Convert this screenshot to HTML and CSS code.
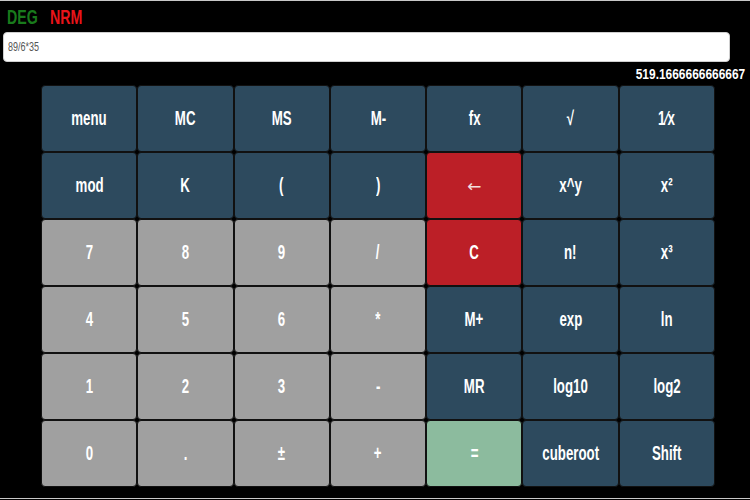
FILE: index.html
```html
<!DOCTYPE html>
<html>
<head>
<meta charset="utf-8">
<link rel="stylesheet" href="styles.css">
</head>
<body>
<div class="frame">
  <div class="modes">
    <span class="sq deg">DEG</span><span class="sq nrm">NRM</span>
  </div>
  <div class="input"><span class="sq">89/6*35</span></div>
  <div class="result"><span class="sq">519.1666666666667</span></div>
  <div class="keys">
    <div class="key blue"><span class="sq">menu</span></div>
    <div class="key blue"><span class="sq">MC</span></div>
    <div class="key blue"><span class="sq">MS</span></div>
    <div class="key blue"><span class="sq">M-</span></div>
    <div class="key blue"><span class="sq">fx</span></div>
    <div class="key blue"><span class="sq">√</span></div>
    <div class="key blue"><span class="sq">1⁄x</span></div>

    <div class="key blue"><span class="sq">mod</span></div>
    <div class="key blue"><span class="sq">K</span></div>
    <div class="key blue"><span class="sq">(</span></div>
    <div class="key blue"><span class="sq">)</span></div>
    <div class="key red"><span class="sq arrow">←</span></div>
    <div class="key blue"><span class="sq">x^y</span></div>
    <div class="key blue"><span class="sq">x²</span></div>

    <div class="key gray"><span class="sq">7</span></div>
    <div class="key gray"><span class="sq">8</span></div>
    <div class="key gray"><span class="sq">9</span></div>
    <div class="key gray"><span class="sq">/</span></div>
    <div class="key red"><span class="sq">C</span></div>
    <div class="key blue"><span class="sq">n!</span></div>
    <div class="key blue"><span class="sq">x³</span></div>

    <div class="key gray"><span class="sq">4</span></div>
    <div class="key gray"><span class="sq">5</span></div>
    <div class="key gray"><span class="sq">6</span></div>
    <div class="key gray"><span class="sq">*</span></div>
    <div class="key blue"><span class="sq">M+</span></div>
    <div class="key blue"><span class="sq">exp</span></div>
    <div class="key blue"><span class="sq">ln</span></div>

    <div class="key gray"><span class="sq">1</span></div>
    <div class="key gray"><span class="sq">2</span></div>
    <div class="key gray"><span class="sq">3</span></div>
    <div class="key gray"><span class="sq">-</span></div>
    <div class="key blue"><span class="sq">MR</span></div>
    <div class="key blue"><span class="sq">log10</span></div>
    <div class="key blue"><span class="sq">log2</span></div>

    <div class="key gray"><span class="sq">0</span></div>
    <div class="key gray"><span class="sq">.</span></div>
    <div class="key gray"><span class="sq">±</span></div>
    <div class="key gray"><span class="sq">+</span></div>
    <div class="key green"><span class="sq">=</span></div>
    <div class="key blue"><span class="sq">cuberoot</span></div>
    <div class="key blue"><span class="sq">Shift</span></div>
  </div>
</div>
</body>
</html>
```
FILE: styles.css
```css
html, body {
  margin: 0;
  padding: 0;
  background: #000;
}
body {
  font-family: "Liberation Sans", Arial, sans-serif;
  width: 750px;
  height: 500px;
  overflow: hidden;
}
.frame {
  box-sizing: border-box;
  width: 750px;
  height: 499px;
  border-top: 1px solid #c8c8c8;
  border-bottom: 1px solid #c8c8c8;
}
.sq {
  display: inline-block;
  transform: scaleX(0.68);
  white-space: nowrap;
}
.modes {
  height: 31px;
  display: flex;
  align-items: center;
  padding-left: 7px;
  font-weight: bold;
  font-size: 20px;
  padding-top: 1px;
  box-sizing: border-box;
}
.modes .sq {
  transform-origin: left center;
  transform: scaleX(0.71);
}
.deg { color: #197a1c; width: 43px; }
.nrm { color: #e8141a; }
.input {
  box-sizing: border-box;
  margin-left: 3px;
  width: 727px;
  height: 30px;
  background: #fff;
  border: 1px solid #cfcfcf;
  border-radius: 4px;
  display: flex;
  align-items: center;
  padding-left: 4px;
  font-size: 12.5px;
  color: #555;
}
.input .sq {
  transform-origin: left center;
  transform: scaleX(0.72);
}
.result {
  height: 23px;
  display: flex;
  align-items: center;
  justify-content: flex-end;
  padding-right: 5px;
  color: #fff;
  font-weight: bold;
  font-size: 15.5px;
}
.result .sq {
  transform-origin: right center;
  transform: scaleX(0.77);
}
.keys {
  margin-left: 41px;
  width: 674px;
  display: grid;
  grid-template-columns: repeat(7, 1fr);
  grid-template-rows: repeat(6, 67px);
}
.key {
  box-sizing: border-box;
  border: 1px solid #111;
  border-radius: 4px;
  display: flex;
  align-items: center;
  justify-content: center;
  color: #fff;
  font-weight: bold;
  font-size: 19.5px;
}
.blue { background: #2d4a5e; }
.gray { background: #a0a0a0; }
.red { background: #bc1f27; }
.green { background: #8cbb9e; }
.key .arrow {
  font-family: "DejaVu Sans", sans-serif;
  font-weight: normal;
  font-size: 17px;
  transform: none;
  color: #f2dede;
}
```
